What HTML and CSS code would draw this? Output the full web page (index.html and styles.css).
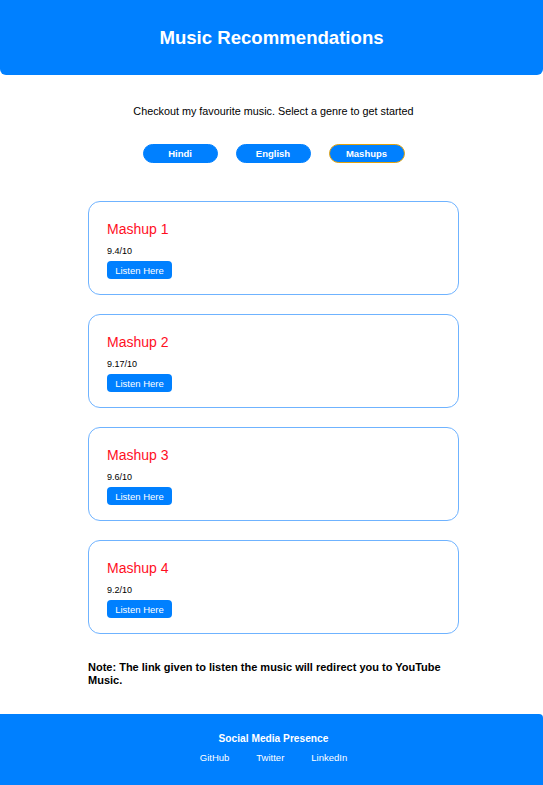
FILE: index.html
```html
<!DOCTYPE html>
<html lang="en">
<head>
<meta charset="utf-8">
<title>Music Recommendations</title>
<link rel="stylesheet" href="styles.css">
</head>
<body>
<header class="header">
  <h1 class="title">Music Recommendations</h1>
</header>
<main class="main">
  <p class="intro">Checkout my favourite music. Select a genre to get started</p>
  <div class="genres">
    <button class="genre">Hindi</button>
    <button class="genre">English</button>
    <button class="genre active">Mashups</button>
  </div>
  <ul class="list">
    <li class="card">
      <div class="card-title">Mashup 1</div>
      <div class="rating">9.4/10</div>
      <a class="listen" href="#">Listen Here</a>
    </li>
    <li class="card">
      <div class="card-title">Mashup 2</div>
      <div class="rating">9.17/10</div>
      <a class="listen" href="#">Listen Here</a>
    </li>
    <li class="card">
      <div class="card-title">Mashup 3</div>
      <div class="rating">9.6/10</div>
      <a class="listen" href="#">Listen Here</a>
    </li>
    <li class="card">
      <div class="card-title">Mashup 4</div>
      <div class="rating">9.2/10</div>
      <a class="listen" href="#">Listen Here</a>
    </li>
  </ul>
  <p class="note">Note: The link given to listen the music will redirect you to YouTube Music.</p>
</main>
<footer class="footer">
  <div class="footer-title">Social Media Presence</div>
  <div class="links">
    <a href="#">GitHub</a>
    <a href="#">Twitter</a>
    <a href="#">LinkedIn</a>
  </div>
</footer>
</body>
</html>
```
FILE: styles.css
```css
html, body {
  margin: 0;
  padding: 0;
}
body {
  font-family: "Liberation Sans", Arial, sans-serif;
  color: #000;
  background: #fff;
  width: 543px;
  min-height: 785px;
  display: flex;
  flex-direction: column;
}
.header {
  background: #0080ff;
  height: 75px;
  display: flex;
  align-items: center;
  justify-content: center;
  border-radius: 0 0 6px 6px;
}
.title {
  margin: 0;
  color: #fff;
  font-size: 18.6px;
  font-weight: bold;
}
.main {
  flex: 1;
  display: flex;
  flex-direction: column;
  align-items: center;
}
.intro {
  margin: 30px 0 0;
  font-size: 10.8px;
  line-height: 13px;
  position: relative;
  left: 2px;
}
.genres {
  display: flex;
  gap: 18px;
  margin-top: 26px;
  position: relative;
  left: 2px;
}
.genre {
  width: 75px;
  height: 19px;
  border: 1px solid #0080ff;
  border-radius: 10px;
  background: #0080ff;
  color: #fff;
  font-family: "Liberation Sans", Arial, sans-serif;
  font-size: 9.5px;
  font-weight: bold;
  padding: 0;
}
.genre.active {
  border: 1.5px solid #e3a20c;
  width: 76px;
}
.list {
  list-style: none;
  margin: 38px 0 0;
  padding: 0;
  width: 371px;
  display: flex;
  flex-direction: column;
  gap: 19px;
  position: relative;
  left: 2px;
}
.card {
  border: 1px solid #6fb3ff;
  border-radius: 12px;
  height: 92px;
  padding: 0 18px;
}
.card-title {
  color: #ff0f1f;
  font-size: 14px;
  line-height: 16px;
  margin-top: 19px;
}
.rating {
  font-size: 9px;
  line-height: 11px;
  margin-top: 9px;
}
.listen {
  display: inline-flex;
  align-items: center;
  justify-content: center;
  width: 65px;
  height: 18px;
  margin-top: 4px;
  background: #0080ff;
  color: #fff;
  border-radius: 4px;
  font-size: 9.5px;
  text-decoration: none;
}
.note {
  width: 371px;
  position: relative;
  left: 2px;
  margin: 27px 0 19px;
  font-size: 11px;
  line-height: 13px;
  font-weight: bold;
}
.footer {
  background: #0080ff;
  height: 71px;
  border-radius: 0 4px 0 0;
  display: flex;
  flex-direction: column;
  align-items: center;
  color: #fff;
}
.footer-title {
  margin-top: 19px;
  font-size: 10.2px;
  font-weight: bold;
  line-height: 11px;
  position: relative;
  left: 2px;
}
.links {
  display: flex;
  gap: 27px;
  margin-top: 8px;
  font-size: 9.5px;
  line-height: 11px;
  position: relative;
  left: 2px;
}
.links a {
  color: #fff;
  text-decoration: none;
}
```
